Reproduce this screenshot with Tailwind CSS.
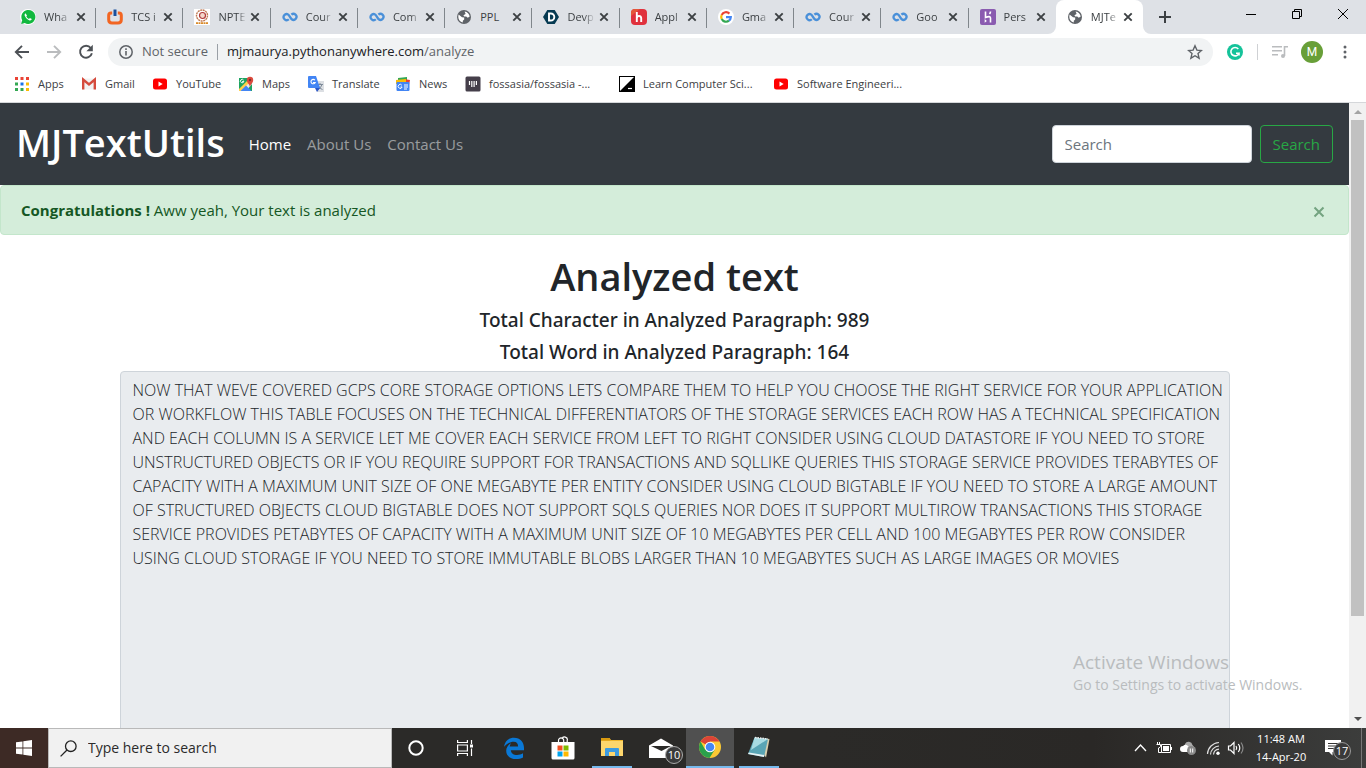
<!DOCTYPE html>
<html lang="en">
<head>
    <meta charset="UTF-8">
    <meta name="viewport" content="width=device-width, initial-scale=1.0">
    <title>MJTextUtils</title>
    <script src="https://cdn.jsdelivr.net/npm/@tailwindcss/browser@4"></script>
</head>
<body class="h-screen flex flex-col overflow-hidden bg-white font-['Open_Sans',sans-serif]">

    <!-- shared icons -->
    <svg class="hidden">
        <symbol id="close" viewBox="0 0 10 10"><path d="M1.3 1.3 8.7 8.7M8.7 1.3 1.3 8.7" stroke="#3c4043" stroke-width="1.9"/></symbol>
        <symbol id="coursera" viewBox="0 0 16 16"><path d="M6.8 10.2A3 3 0 1 1 6.3 5.6C7.6 6.6 8.4 9.4 9.7 10.3A3 3 0 1 0 9.4 5.7" fill="none" stroke="#4a90d9" stroke-width="2.3"/></symbol>
        <symbol id="globe" viewBox="0 0 16 16"><circle cx="8" cy="8" r="7" fill="#5f6368"/><path d="M2.6 5.6 6 8.2l2.2.2v2.2l-1.4 1.2v1.6C4 12.8 2.3 10.5 2.3 8c0-.9.1-1.6.3-2.4zM8.6 2.4c2.7.3 4.8 2.5 5.1 5.2l-1.9 1.2-1.6-1.2H8.2L7.4 6.3l2.2-1.4z" fill="#fff"/></symbol>
        <symbol id="youtube" viewBox="0 0 16 16"><rect x="1" y="2.5" width="14" height="11" rx="2.5" fill="#f00"/><path d="M6.5 5.5v5L10.7 8z" fill="#fff"/></symbol>
    </svg>

    <!-- tab strip -->
    <header class="shrink-0">
        <div class="flex h-[34px] bg-[#dee1e6] pl-[9px] text-[11px] text-[#3c4043]">
            <div class="flex w-[1134px] min-w-0">
                <div class="relative flex flex-1 min-w-0 items-center pl-[11px]">
                    <svg class="size-4 shrink-0" viewBox="0 0 16 16"><circle cx="8" cy="8" r="8" fill="#fff"/><path d="M1.2 15 2.2 11.3A7 7 0 1 1 4.8 14z" fill="#12b83f"/><path d="M5.4 4.2c-1 .7-1 2-.2 3.4.9 1.7 2.2 2.9 3.9 3.6 1.4.5 2.4 0 2.7-1.2L9.9 9l-.9 1C7.7 9.5 6.9 8.6 6.3 7.5l.7-.9z" fill="#fff"/></svg>
                    <span class="ml-2 w-7 whitespace-nowrap mask-r-from-50%">Wha</span>
                    <button aria-label="Close tab" class="ml-1"><svg class="size-[10px]"><use href="#close"/></svg></button>
                    <i class="absolute right-0 top-2 h-5 w-px bg-[#80868b]"></i>
                </div>
                <div class="relative flex flex-1 min-w-0 items-center pl-[11px]">
                    <svg class="size-4 shrink-0" viewBox="0 0 16 16"><path d="M5.2 4H4Q1.7 4 1.7 6.3v4.4q0 3.3 3.3 3.3h6q3.3 0 3.3-3.3V6.3Q14.3 4 12 4h-1.2" fill="none" stroke="#f26522" stroke-width="3"/><path d="M8 .5v6.5" stroke="#1a4f9c" stroke-width="3"/></svg>
                    <span class="ml-2 w-7 whitespace-nowrap mask-r-from-80%">TCS i</span>
                    <button aria-label="Close tab" class="ml-1"><svg class="size-[10px]"><use href="#close"/></svg></button>
                    <i class="absolute right-0 top-2 h-5 w-px bg-[#80868b]"></i>
                </div>
                <div class="relative flex flex-1 min-w-0 items-center pl-[11px]">
                    <svg class="size-4 shrink-0" viewBox="0 0 16 16"><path d="M0 0h16v16H0z" fill="#fff"/><circle cx="8" cy="6.5" r="5.5" fill="none" stroke="#c07a55" stroke-width="1.4" stroke-dasharray="2 .6"/><circle cx="8.5" cy="6.5" r="3" fill="#f4d9cc" stroke="#b23b3b" stroke-width="1.2"/><path d="M2 14.2h12" stroke="#d98b2b" stroke-width="1.8" stroke-dasharray="2 .5"/></svg>
                    <span class="ml-2 w-7 whitespace-nowrap mask-r-from-70%">NPTE</span>
                    <button aria-label="Close tab" class="ml-1"><svg class="size-[10px]"><use href="#close"/></svg></button>
                    <i class="absolute right-0 top-2 h-5 w-px bg-[#80868b]"></i>
                </div>
                <div class="relative flex flex-1 min-w-0 items-center pl-[11px]">
                    <svg class="size-4 shrink-0"><use href="#coursera"/></svg>
                    <span class="ml-2 w-7 whitespace-nowrap mask-r-from-60%">Cour</span>
                    <button aria-label="Close tab" class="ml-1"><svg class="size-[10px]"><use href="#close"/></svg></button>
                    <i class="absolute right-0 top-2 h-5 w-px bg-[#80868b]"></i>
                </div>
                <div class="relative flex flex-1 min-w-0 items-center pl-[11px]">
                    <svg class="size-4 shrink-0"><use href="#coursera"/></svg>
                    <span class="ml-2 w-7 whitespace-nowrap mask-r-from-60%">Com</span>
                    <button aria-label="Close tab" class="ml-1"><svg class="size-[10px]"><use href="#close"/></svg></button>
                    <i class="absolute right-0 top-2 h-5 w-px bg-[#80868b]"></i>
                </div>
                <div class="relative flex flex-1 min-w-0 items-center pl-[11px]">
                    <svg class="size-4 shrink-0"><use href="#globe"/></svg>
                    <span class="ml-2 w-7 whitespace-nowrap">PPL</span>
                    <button aria-label="Close tab" class="ml-1"><svg class="size-[10px]"><use href="#close"/></svg></button>
                    <i class="absolute right-0 top-2 h-5 w-px bg-[#80868b]"></i>
                </div>
                <div class="relative flex flex-1 min-w-0 items-center pl-[11px]">
                    <svg class="size-4 shrink-0" viewBox="0 0 16 16"><path d="M4.3 1h7.4L16 8l-4.3 7H4.3L0 8z" fill="#063a52"/><path d="M6 4.5h1.8a3 3 0 0 1 0 7H6z" fill="none" stroke="#fff" stroke-width="1.9"/></svg>
                    <span class="ml-2 w-7 whitespace-nowrap mask-r-from-60%">Devp</span>
                    <button aria-label="Close tab" class="ml-1"><svg class="size-[10px]"><use href="#close"/></svg></button>
                    <i class="absolute right-0 top-2 h-5 w-px bg-[#80868b]"></i>
                </div>
                <div class="relative flex flex-1 min-w-0 items-center pl-[11px]">
                    <svg class="size-4 shrink-0" viewBox="0 0 16 16"><rect width="16" height="16" rx="4" fill="#e0313d"/><path d="M0 7V4a4 4 0 0 1 4-4h5z" fill="#e4573a"/><path d="M5.8 3v10M5.8 9.2Q6 7 8 7t2.2 2.2V13" fill="none" stroke="#fff" stroke-width="1.9"/></svg>
                    <span class="ml-2 w-7 whitespace-nowrap mask-r-from-70%">Appl</span>
                    <button aria-label="Close tab" class="ml-1"><svg class="size-[10px]"><use href="#close"/></svg></button>
                    <i class="absolute right-0 top-2 h-5 w-px bg-[#80868b]"></i>
                </div>
                <div class="relative flex flex-1 min-w-0 items-center pl-[11px]">
                    <svg class="size-4 shrink-0" viewBox="0 0 16 16"><circle cx="8" cy="8" r="8" fill="#fff"/><g fill="none" stroke-width="2.2"><path d="M11.4 4.6A4.8 4.8 0 0 0 3.7 5.9" stroke="#ea4335"/><path d="M3.7 5.9a4.8 4.8 0 0 0 0 4.2" stroke="#fbbc05"/><path d="M3.7 10.1a4.8 4.8 0 0 0 7.3 1.6" stroke="#34a853"/><path d="M11 11.7A4.8 4.8 0 0 0 12.8 8.2H8" stroke="#4285f4"/></g></svg>
                    <span class="ml-2 w-7 whitespace-nowrap mask-r-from-60%">Gma</span>
                    <button aria-label="Close tab" class="ml-1"><svg class="size-[10px]"><use href="#close"/></svg></button>
                    <i class="absolute right-0 top-2 h-5 w-px bg-[#80868b]"></i>
                </div>
                <div class="relative flex flex-1 min-w-0 items-center pl-[11px]">
                    <svg class="size-4 shrink-0"><use href="#coursera"/></svg>
                    <span class="ml-2 w-7 whitespace-nowrap mask-r-from-60%">Cour</span>
                    <button aria-label="Close tab" class="ml-1"><svg class="size-[10px]"><use href="#close"/></svg></button>
                    <i class="absolute right-0 top-2 h-5 w-px bg-[#80868b]"></i>
                </div>
                <div class="relative flex flex-1 min-w-0 items-center pl-[11px]">
                    <svg class="size-4 shrink-0"><use href="#coursera"/></svg>
                    <span class="ml-2 w-7 whitespace-nowrap mask-r-from-70%">Goo</span>
                    <button aria-label="Close tab" class="ml-1"><svg class="size-[10px]"><use href="#close"/></svg></button>
                    <i class="absolute right-0 top-2 h-5 w-px bg-[#80868b]"></i>
                </div>
                <div class="relative flex flex-1 min-w-0 items-center pl-[11px]">
                    <svg class="size-4 shrink-0" viewBox="0 0 16 16"><rect width="16" height="16" rx="2" fill="#8a5bb0"/><path d="M5.5 2.5v6Q10.5 6.5 10.5 9v4.5M10.5 2.5q0 1.5-1 2.5" fill="none" stroke="#fff" stroke-width="1.6"/><path d="M4.7 10v3.8L6.8 12z" fill="#fff"/></svg>
                    <span class="ml-2 w-7 whitespace-nowrap mask-r-from-70%">Pers</span>
                    <button aria-label="Close tab" class="ml-1"><svg class="size-[10px]"><use href="#close"/></svg></button>
                </div>
                <div class="relative flex flex-1 min-w-0 items-center rounded-t-lg bg-white pl-[11px]">
                    <svg class="size-4 shrink-0"><use href="#globe"/></svg>
                    <span class="ml-2 w-7 whitespace-nowrap mask-r-from-60%">MJTe</span>
                    <button aria-label="Close tab" class="ml-1"><svg class="size-[10px]"><use href="#close"/></svg></button>
                    <svg class="absolute -left-2 bottom-0 size-2" viewBox="0 0 8 8"><path d="M8 0v8H0a8 8 0 0 0 8-8z" fill="#fff"/></svg>
                    <svg class="absolute -right-2 bottom-0 size-2" viewBox="0 0 8 8"><path d="M0 0v8h8a8 8 0 0 1-8-8z" fill="#fff"/></svg>
                </div>
            </div>
            <button aria-label="New tab" class="ml-4 w-3"><svg class="size-3" viewBox="0 0 12 12"><path d="M6 0v12M0 6h12" stroke="#3c4043" stroke-width="2"/></svg></button>
            <div class="ml-auto flex h-7">
                <button aria-label="Minimize" class="grid w-[46px] place-items-center"><svg class="size-[10px]" viewBox="0 0 10 10"><path d="M0 5.5h10" stroke="#000"/></svg></button>
                <button aria-label="Restore" class="grid w-[46px] place-items-center"><svg class="size-[10px]" viewBox="0 0 10 10" fill="none" stroke="#000"><path d="M.5 2.5h7v7h-7zM2.5 2.5v-2h7v7h-2"/></svg></button>
                <button aria-label="Close" class="grid w-[46px] place-items-center"><svg class="size-[10px]" viewBox="0 0 10 10"><path d="M0 0l10 10M10 0 0 10" stroke="#000"/></svg></button>
            </div>
        </div>

        <!-- toolbar -->
        <div class="flex h-9 items-center">
            <button aria-label="Back" class="ml-[14px]"><svg class="size-4" viewBox="0 0 16 16" fill="none" stroke="#4d5156" stroke-width="1.9"><path d="M15 8H2.5M8 1.8 1.8 8 8 14.2"/></svg></button>
            <button aria-label="Forward" class="ml-4"><svg class="size-4" viewBox="0 0 16 16" fill="none" stroke="#babcbe" stroke-width="1.9"><path d="M1 8h12.5M8 1.8 14.2 8 8 14.2"/></svg></button>
            <button aria-label="Reload" class="ml-4"><svg class="size-4" viewBox="0 0 16 16"><path d="M12.8 4A6 6 0 1 0 13.9 9.3" fill="none" stroke="#4d5156" stroke-width="1.9"/><path d="M14.8.8v6.4H8.4z" fill="#4d5156"/></svg></button>
            <div class="ml-[14px] flex h-7 flex-1 items-center rounded-full bg-[#f1f3f4] pl-[11px] pr-[10px] text-[13px] text-[#5f6368]">
                <svg class="size-[14px]" viewBox="0 0 14 14"><circle cx="7" cy="7" r="6.2" fill="none" stroke="#5f6368" stroke-width="1.5"/><path d="M7 6v4.5M7 3.3v1.6" stroke="#5f6368" stroke-width="1.6"/></svg>
                <span class="ml-[9px] w-[67px] whitespace-nowrap">Not secure</span>
                <i class="mr-[9px] ml-2 h-4 w-px bg-[#9aa0a6]"></i>
                <input aria-label="Address" class="sr-only" value="mjmaurya.pythonanywhere.com/analyze">
                <span class="flex-1"><span class="text-[#202124]">mjmaurya.pythonanywhere.com</span>/analyze</span>
                <button aria-label="Bookmark this page"><svg class="size-4" viewBox="0 0 16 16"><path d="m8 1.8 1.9 4.3 4.6.4-3.5 3.1 1.1 4.6L8 11.7l-4.1 2.5L5 9.6 1.5 6.5l4.6-.4z" fill="none" stroke="#5f6368" stroke-width="1.4"/></svg></button>
            </div>
            <button aria-label="Grammarly" class="ml-[14px]"><svg class="size-4" viewBox="0 0 16 16"><circle cx="8" cy="8" r="8" fill="#15c39a"/><path d="M11.3 5A4.2 4.2 0 1 0 12 9.2H9M12 9v2.6" fill="none" stroke="#fff" stroke-width="1.6"/></svg></button>
            <i class="ml-[14px] h-4 w-px bg-[#cfd1d4]"></i>
            <button aria-label="Media controls" class="ml-[14px]"><svg class="size-4" viewBox="0 0 16 16" fill="none" stroke="#babcbe" stroke-width="1.6"><path d="M0 2.8h10M0 6.8h10M0 10.8h6M12.5 12V2.8H16"/><circle cx="11" cy="12" r="2" fill="#babcbe" stroke="none"/></svg></button>
            <button aria-label="Profile" class="ml-[13px] size-[22px] rounded-full bg-[#689f38] font-[Roboto] text-xs text-white">M</button>
            <button aria-label="Menu" class="ml-5 mr-[19px]"><svg class="h-4 w-1" viewBox="0 0 4 16" fill="#5f6368"><circle cx="2" cy="3" r="1.5"/><circle cx="2" cy="8" r="1.5"/><circle cx="2" cy="13" r="1.5"/></svg></button>
        </div>

        <!-- bookmarks -->
        <nav class="flex h-[33px] items-center border-b border-[#d5d7da] pb-1 pl-[14px] text-[11px] whitespace-nowrap text-[#3c4043]">
            <a href="#" class="flex w-[67px] items-center gap-2">
                <svg class="size-4" viewBox="0 0 16 16"><path d="M1 1h3v3H1zM6.5 1h3v3h-3zM12 1h3v3h-3z" fill="#ea4335"/><path d="M1 6.5h3v3H1zM1 12h3v3H1zM6.5 12h3v3h-3z" fill="#34a853"/><path d="M6.5 6.5h3v3h-3z" fill="#1a73e8"/><path d="M12 6.5h3v3h-3zM12 12h3v3h-3z" fill="#fbbc05"/></svg>Apps</a>
            <a href="#" class="flex w-[71px] items-center gap-2">
                <svg class="size-4" viewBox="0 0 16 16"><path d="M1 2.5h14v11H1z" fill="#f2f2f2"/><path d="M2.2 13.5V3.5L8 8.5l5.8-5v10" fill="none" stroke="#d54b3d" stroke-width="2.4"/></svg>Gmail</a>
            <a href="#" class="flex w-[86px] items-center gap-2">
                <svg class="size-4"><use href="#youtube"/></svg>YouTube</a>
            <a href="#" class="flex w-[70px] items-center gap-2">
                <svg class="size-4" viewBox="0 0 16 16"><path d="M1 2h13v13H1z" fill="#1da462"/><path d="M1 15 10 5l4 3-6 7z" fill="#e8eaed"/><path d="M1 13 11 3l2 2L3 15H1z" fill="#ffd04b"/><path d="m8 9.5 5.5 5.5h-11z" fill="#4285f4"/><path d="M12 11C11.5 8 8.8 7 8.8 4a3.2 3.2 0 0 1 6.4 0c0 3-2.7 4-3.2 7z" fill="#dd4b3e"/><circle cx="12" cy="4" r="1.2" fill="#822f2b"/><path d="M5.6 4.2a1.7 1.7 0 1 0 .2 1.3H4.2" fill="none" stroke="#fff"/></svg>Maps</a>
            <a href="#" class="flex w-[87px] items-center gap-2">
                <svg class="size-4" viewBox="0 0 16 16"><path d="M6 5h10v11H9z" fill="#dcdfe3"/><path d="M9 8.5h6M12 7v1.5M14 8.5q-1 3.5-4 5M10.5 10q1.5 3 4 3.5" fill="none" stroke="#7d8a99"/><path d="M0 1q0-1 1-1h7l4 12H1q-1 0-1-1z" fill="#4285f4"/><path d="M7 12h5l-3 4z" fill="#2a56c6"/><path d="M6.9 4.2A2.2 2.2 0 1 0 7.2 6.5H5" fill="none" stroke="#fff" stroke-width="1.1"/></svg>Translate</a>
            <a href="#" class="flex w-[70px] items-center gap-2">
                <svg class="size-4" viewBox="0 0 16 16"><path d="M3 2l9-1v6H3z" fill="#34a853"/><path d="M9 3l6 1-1 5H8z" fill="#ea4335"/><path d="M1 4l10-1v5H1z" fill="#fbbc05"/><rect x="1.5" y="6" width="13" height="9" rx="1" fill="#4285f4"/><path d="M6.8 9.2a2 2 0 1 0 .3 1.8H5.5M9 9h4M9 11h4M9 13h3" fill="none" stroke="#fff"/></svg>News</a>
            <a href="#" class="flex w-[154px] items-center gap-2">
                <svg class="size-4" viewBox="0 0 16 16"><rect x=".5" y=".5" width="15" height="15" rx="1.5" fill="#453f4a"/><path d="M4.5 5v4M6.8 5v6M9.1 5v6M11.4 5v4" stroke="#fff" stroke-width="1.2"/></svg>fossasia/fossasia -...</a>
            <a href="#" class="flex w-[154px] items-center gap-2">
                <svg class="size-4" viewBox="0 0 16 16"><path d="M0 0h16v16H0z" fill="#000"/><path d="M1 1h14L1 15z" fill="#fff"/><path d="M9 12.5h4" stroke="#fff" stroke-width="1.2"/></svg>Learn Computer Sci...</a>
            <a href="#" class="flex items-center gap-2">
                <svg class="size-4"><use href="#youtube"/></svg>Software Engineeri...</a>
        </nav>
    </header>

    <!-- page -->
    <div class="relative flex min-h-0 flex-1">
        <main class="min-w-0 flex-1 overflow-hidden text-[15px] leading-6 text-[#212529]">
            <nav class="flex h-[82px] items-center bg-[#343a40] px-4">
                <a href="#" class="mr-4 mb-1 text-[38px] leading-[50px] font-semibold text-white">MJTextUtils</a>
                <ul class="flex text-white/50">
                    <li><a href="#" class="block p-2 text-white">Home</a></li>
                    <li><a href="#" class="block p-2">About Us</a></li>
                    <li><a href="#" class="block p-2">Contact Us</a></li>
                </ul>
                <form class="ml-auto flex gap-2">
                    <input type="search" aria-label="Search" placeholder="Search" class="h-[38px] w-[200px] rounded border border-[#ced4da] bg-white px-3 placeholder:text-[#6c757d]">
                    <button type="button" class="h-[38px] rounded border border-[#28a745] px-3 text-[#28a745]">Search</button>
                </form>
            </nav>
            <div role="alert" class="mb-4 flex h-[50px] items-center justify-between rounded border border-[#c3e6cb] bg-[#d4edda] pr-[23px] pl-5 text-[#155724]">
                <p><strong>Congratulations !</strong> Aww yeah, Your text is analyzed</p>
                <button aria-label="Dismiss" class="mt-1"><svg class="size-3" viewBox="0 0 12 12"><path d="M1.5 1.5l9 9M10.5 1.5l-9 9" stroke="#74a380" stroke-width="2"/></svg></button>
            </div>
            <div class="mx-auto max-w-[1140px] px-[15px]">
                <h1 class="mb-[6px] text-center text-[38px] leading-[50px] font-semibold">Analyzed text</h1>
                <h5 class="mb-[6px] text-center font-['Noto_Sans',sans-serif] text-[19px] leading-[26px] font-medium">Total Character in Analyzed Paragraph: 989</h5>
                <h5 class="mb-[6px] text-center font-['Noto_Sans',sans-serif] text-[19px] leading-[26px] font-medium">Total Word in Analyzed Paragraph: 164</h5>
                <textarea aria-label="Analyzed text" readonly rows="16" class="block w-full resize-none overflow-hidden rounded border border-[#ced4da] bg-[#e9ecef] px-3 py-[6px] text-base font-light whitespace-pre text-[#212529]">NOW THAT WEVE COVERED GCPS CORE STORAGE OPTIONS LETS COMPARE THEM TO HELP YOU CHOOSE THE RIGHT SERVICE FOR YOUR APPLICATION
OR WORKFLOW THIS TABLE FOCUSES ON THE TECHNICAL DIFFERENTIATORS OF THE STORAGE SERVICES EACH ROW HAS A TECHNICAL SPECIFICATION
AND EACH COLUMN IS A SERVICE LET ME COVER EACH SERVICE FROM LEFT TO RIGHT CONSIDER USING CLOUD DATASTORE IF YOU NEED TO STORE
UNSTRUCTURED OBJECTS OR IF YOU REQUIRE SUPPORT FOR TRANSACTIONS AND SQLLIKE QUERIES THIS STORAGE SERVICE PROVIDES TERABYTES OF
CAPACITY WITH A MAXIMUM UNIT SIZE OF ONE MEGABYTE PER ENTITY CONSIDER USING CLOUD BIGTABLE IF YOU NEED TO STORE A LARGE AMOUNT
OF STRUCTURED OBJECTS CLOUD BIGTABLE DOES NOT SUPPORT SQLS QUERIES NOR DOES IT SUPPORT MULTIROW TRANSACTIONS THIS STORAGE
SERVICE PROVIDES PETABYTES OF CAPACITY WITH A MAXIMUM UNIT SIZE OF 10 MEGABYTES PER CELL AND 100 MEGABYTES PER ROW CONSIDER
USING CLOUD STORAGE IF YOU NEED TO STORE IMMUTABLE BLOBS LARGER THAN 10 MEGABYTES SUCH AS LARGE IMAGES OR MOVIES</textarea>
            </div>
        </main>
        <!-- scrollbar -->
        <div class="flex w-[17px] shrink-0 flex-col items-center justify-between bg-[#f1f1f1]">
            <svg class="h-[17px] w-2 shrink-0" viewBox="0 0 8 17"><path d="M0 11h8L4 7z" fill="#a3a3a3"/></svg>
            <div class="w-[13px] flex-1"><div class="h-[84%] bg-[#c1c1c1]"></div></div>
            <svg class="h-[17px] w-2 shrink-0" viewBox="0 0 8 17"><path d="M0 6h8l-4 4z" fill="#505050"/></svg>
        </div>
        <!-- activation notice -->
        <div class="pointer-events-none absolute right-[57px] bottom-[33px] w-[236px] whitespace-nowrap text-[#b9bcbe]">
            <p class="text-[19px] leading-[26px]">Activate Windows</p>
            <p class="text-sm leading-5">Go to Settings to activate Windows.</p>
        </div>
    </div>

    <!-- taskbar -->
    <footer class="flex h-10 shrink-0 bg-linear-to-r from-[#2b2a28] from-60% via-[#2a2826] via-80% to-[#3c3d3c] text-white">
        <button aria-label="Start" class="grid w-12 place-items-center bg-[#3d2a25]"><svg class="size-4" viewBox="0 0 16 16" fill="#fff"><path d="M0 2.3 6.5 1.4v6.2H0zM7.3 1.3 16 0v7.6H7.3zM0 8.4h6.5v6.2L0 13.7zM7.3 8.4H16V16l-8.7-1.3z"/></svg></button>
        <label class="flex w-[344px] items-center border border-[#b9b9b9] bg-[#f1f1f1] pl-[11px]">
            <svg class="size-[17px]" viewBox="0 0 17 17" fill="none" stroke="#222" stroke-width="1.3"><circle cx="10.8" cy="6.2" r="5.3"/><path d="M7 10 .6 16.4"/></svg>
            <input type="text" aria-label="Type here to search" placeholder="Type here to search" class="ml-[11px] flex-1 bg-transparent text-sm placeholder:text-[#2b2b2b]">
        </label>
        <div class="flex gap-px">
            <button aria-label="Cortana" class="grid w-12 place-items-center"><svg class="size-4" viewBox="0 0 16 16"><circle cx="8" cy="8" r="6.7" fill="none" stroke="#fff" stroke-width="2"/></svg></button>
            <button aria-label="Task view" class="grid w-12 place-items-center"><svg class="size-4" viewBox="0 0 16 16" fill="none" stroke="#fff" stroke-width="1.2"><path d="M.6 0v2.5h9.8V0M.6 5h9.8v6H.6zM.6 16v-2.5h9.8V16M14.5 0v4M14.5 8.5V16"/><path d="M13 4.5h3v3h-3z" fill="#fff" stroke="none"/></svg></button>
            <button aria-label="Edge" class="grid w-12 place-items-center"><svg class="size-[22px]" viewBox="0 0 22 22"><path d="M1 9.8C1.8 4 5.8.8 11 .8c6.4 0 10 4.6 10 10.2v2.2H7.8c.2 3.2 3 4.8 6.2 4.8 2.3 0 4.3-.6 6-1.7v4.2c-2 1-4.3 1.5-6.9 1.5-6 0-9.9-3.2-9.9-8.3 0-3.3 1.9-6 4.9-7.4-.8 1-1.3 2.2-1.4 3.3h8.4c0-3-1.5-4.8-4.3-4.8-3.8 0-7.3 2-9.8 5z" fill="#0a78d6"/></svg></button>
            <button aria-label="Store" class="grid w-12 place-items-center"><svg class="size-6" viewBox="0 0 24 24"><path d="M7.5 7V4.5a2.6 2.6 0 0 1 2.6-2.6 2.6 2.6 0 0 1 2.6 2.6V7M11 3a2.6 2.6 0 0 1 5.2 1.5V7" fill="none" stroke="#fff" stroke-width="1.2"/><path d="M.5 6h23v16q0 1.5-1.5 1.5H2Q.5 23.5.5 22z" fill="#fff"/><path d="M6.5 9.5h5v5h-5z" fill="#f25022"/><path d="M12.5 9.5h5v5h-5z" fill="#7fba00"/><path d="M6.5 15.5h5v5h-5z" fill="#00a4ef"/><path d="M12.5 15.5h5v5h-5z" fill="#ffb900"/></svg></button>
            <button aria-label="File Explorer" class="mx-1 grid w-10 place-items-center border-b-2 border-[#76b9ed]"><svg class="h-5 w-[22px]" viewBox="0 0 22 20"><path d="M0 1h8.5l1.5 2H22v16H0z" fill="#f0b62c"/><path d="M0 1h8.5l1 2.5H0z" fill="#d99a10"/><path d="M0 4h22v15H0z" fill="#fdd66d"/><path d="M4 19v-7q0-1 1-1h12q1 0 1 1v7h-4v-4H8v4z" fill="#3d9be0"/></svg></button>
            <button aria-label="Mail, 10 unread" class="relative grid w-12 place-items-center">
                <svg class="h-5 w-6" viewBox="0 0 24 20"><path d="M0 7.5 12 .5l12 7V20H0z" fill="#fff"/><path d="M2 8h20l-9.5 5z" fill="#2b2a28"/></svg>
                <span class="absolute right-[2px] bottom-1 size-[18px] rounded-full border border-[#aaa] bg-[#3a3a3a] text-center text-[11px] leading-4">10</span>
            </button>
            <button aria-label="Chrome" class="grid w-12 place-items-center border-b-2 border-[#76b9ed] bg-[#505050]"><svg class="size-[22px]" viewBox="0 0 22 22"><circle cx="11" cy="11" r="11" fill="#fbc934"/><path d="M11 11 1.5 5.5A11 11 0 0 1 20.5 5.5H11z" fill="#dc4437"/><path d="M1.5 5.5A11 11 0 0 0 10.5 22l5.2-8.3L11 11 6.2 13.7z" fill="#2ba14b"/><circle cx="11" cy="11" r="5.3" fill="#fff"/><circle cx="11" cy="11" r="4.3" fill="#4587f3"/></svg></button>
            <button aria-label="Notepad" class="mx-1 grid w-10 place-items-center border-b-2 border-[#76b9ed]"><svg class="size-[22px]" viewBox="0 0 22 22"><path d="M7 1.5 21.5 3 18 21.5 17 20z" fill="#d8cfae"/><path d="M6.5 1.5 20 3l-4 18L0 18z" fill="#5aa5b5"/><path d="M6.5 1.5 20 3 3 14z" fill="#a9dbe2"/><path d="M0 18l16 3 .5-2L.8 16.5z" fill="#e7f2f4"/><path d="M7 1.5 20 3" stroke="#eee" stroke-width="1.5" stroke-dasharray="1.5 1"/></svg></button>
        </div>
        <div class="ml-auto flex items-center">
            <button aria-label="Show hidden icons"><svg class="h-3 w-[13px]" viewBox="0 0 13 12"><path d="M1 9l5.5-6L12 9" fill="none" stroke="#fff" stroke-width="1.3"/></svg></button>
            <svg class="ml-[9px] size-4" viewBox="0 0 16 16" fill="none" stroke="#fff"><path d="M5.5 4.5h9v8h-9zM15.5 7v3M1.5 2v2M3.5 2v2M.5 4.5h4v2q0 1-2 1.5v4.5h3"/><path d="M7 6h6v5H7z" fill="#fff" stroke="none"/></svg>
            <svg class="ml-2 size-4" viewBox="0 0 16 16"><path d="M5 4a4 4 0 0 1 7.5 1L15 8H4z" fill="#aaa"/><path d="M3 12a3 3 0 0 1 0-6q3-2.5 5.5.5L8 12z" fill="#fff"/><circle cx="11.5" cy="10.5" r="4.5" fill="#8a8a8a"/><path d="M10.3 8.5v4M12.7 8.5v4" stroke="#fff"/></svg>
            <svg class="ml-[10px] size-4" viewBox="0 0 16 16" fill="none" stroke="#ddd" stroke-width="1.2"><path d="M1.5 14A12 12 0 0 1 13 2.5M4.5 14.5A9 9 0 0 1 13 6M7.5 14.5A6 6 0 0 1 13 9.2"/><circle cx="12" cy="13.3" r="1.7" fill="#fff" stroke="none"/></svg>
            <svg class="ml-[5px] h-4 w-[18px]" viewBox="0 0 18 16" fill="none" stroke="#fff" stroke-width="1.2"><path d="M1.5 6v4h2l3.5 3.5v-11L3.5 6zM9 6q1.5 2 0 4M11.3 4q3 4 0 8"/><path d="M14 2.5q4 5.5 0 11" stroke="#888"/></svg>
            <p class="ml-[6px] w-[60px] text-center text-[11px] leading-[18px] whitespace-nowrap">11:48 AM<br>14-Apr-20</p>
            <button aria-label="Notifications, 17 new" class="relative ml-[14px] mr-[10px] h-6 w-[26px]">
                <svg class="size-4" viewBox="0 0 16 16"><path d="M0 0h16v12H7.5v3.5L4 12H0z" fill="#fff"/><path d="M3 3.5h10M3 6h10M3 8.5h7" stroke="#333"/></svg>
                <span class="absolute right-0 bottom-0 size-[18px] rounded-full border border-[#999] bg-[#3a3a3a] text-center text-[11px] leading-4">17</span>
            </button>
            <i class="mr-1 h-10 w-px bg-[#777]"></i>
        </div>
    </footer>
</body>
</html>
